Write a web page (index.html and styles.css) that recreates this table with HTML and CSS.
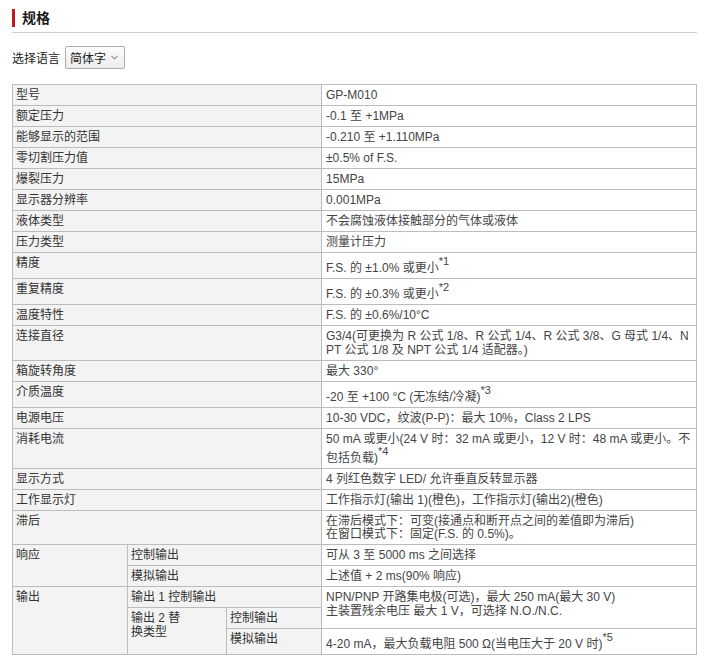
FILE: index.html
```html
<!DOCTYPE html>
<html lang="zh-CN">
<head>
<meta charset="utf-8">
<title>规格</title>
<link rel="stylesheet" href="styles.css">
</head>
<body>
<div class="page">
  <div class="head">
    <h2 class="title">规格</h2>
  </div>
  <div class="lang">
    <span class="lang-label">选择语言</span>
    <span class="select"><span class="select-text">简体字</span><svg class="chev" width="7" height="5" viewBox="0 0 7 5"><path d="M0.5 1 L3.5 4 L6.5 1" fill="none" stroke="#999" stroke-width="1.2"/></svg></span>
  </div>
  <table class="spec">
    <colgroup><col class="c1"><col class="c2"><col class="c3"><col class="c4"></colgroup>
    <tr><th colspan="3">型号</th><td>GP-M010</td></tr>
    <tr><th colspan="3">额定压力</th><td>-0.1 至 +1MPa</td></tr>
    <tr><th colspan="3">能够显示的范围</th><td>-0.210 至 +1.110MPa</td></tr>
    <tr><th colspan="3">零切割压力值</th><td>±0.5% of F.S.</td></tr>
    <tr><th colspan="3">爆裂压力</th><td>15MPa</td></tr>
    <tr><th colspan="3">显示器分辨率</th><td>0.001MPa</td></tr>
    <tr><th colspan="3">液体类型</th><td>不会腐蚀液体接触部分的气体或液体</td></tr>
    <tr><th colspan="3">压力类型</th><td>测量计压力</td></tr>
    <tr><th colspan="3">精度</th><td>F.S. 的 ±1.0% 或更小<sup>*1</sup></td></tr>
    <tr><th colspan="3">重复精度</th><td>F.S. 的 ±0.3% 或更小<sup>*2</sup></td></tr>
    <tr><th colspan="3">温度特性</th><td>F.S. 的 ±0.6%/10°C</td></tr>
    <tr><th colspan="3">连接直径</th><td>G3/4(可更换为 R 公式 1/8、R 公式 1/4、R 公式 3/8、G 母式 1/4、NPT 公式 1/8 及 NPT 公式 1/4 适配器。)</td></tr>
    <tr><th colspan="3">箱旋转角度</th><td>最大 330°</td></tr>
    <tr><th colspan="3">介质温度</th><td>-20 至 +100 °C (无冻结/冷凝)<sup>*3</sup></td></tr>
    <tr><th colspan="3">电源电压</th><td>10-30 VDC，纹波(P-P)：最大 10%，Class 2 LPS</td></tr>
    <tr><th colspan="3">消耗电流</th><td>50 mA 或更小(24 V 时：32 mA 或更小，12 V 时：48 mA 或更小。不包括负载)<sup>*4</sup></td></tr>
    <tr><th colspan="3">显示方式</th><td>4 列红色数字 LED/ 允许垂直反转显示器</td></tr>
    <tr><th colspan="3">工作显示灯</th><td>工作指示灯(输出 1)(橙色)，工作指示灯(输出2)(橙色)</td></tr>
    <tr><th colspan="3">滞后</th><td class="tight">在滞后模式下：可变(接通点和断开点之间的差值即为滞后)<br>在窗口模式下：固定(F.S. 的 0.5%)。</td></tr>
    <tr><th rowspan="2">响应</th><th colspan="2">控制输出</th><td>可从 3 至 5000 ms 之间选择</td></tr>
    <tr><th colspan="2">模拟输出</th><td>上述值 + 2 ms(90% 响应)</td></tr>
    <tr><th rowspan="3">输出</th><th colspan="2">输出 1 控制输出</th><td rowspan="2">NPN/PNP 开路集电极(可选)，最大 250 mA(最大 30 V)<br>主装置残余电压 最大 1 V，可选择 N.O./N.C.</td></tr>
    <tr><th rowspan="2">输出 2 替<br>换类型</th><th>控制输出</th></tr>
    <tr><th>模拟输出</th><td>4-20 mA，最大负载电阻 500 Ω(当电压大于 20 V 时)<sup>*5</sup></td></tr>
  </table>
</div>
</body>
</html>
```

FILE: styles.css
```css
html, body {
  margin: 0;
  padding: 0;
  background: #fff;
}

body {
  font-family: "Liberation Sans", "Noto Sans CJK SC", sans-serif;
  font-size: 12px;
  color: #333;
}

.page {
  padding: 9px 8px 0 12px;
}

.head {
  padding-bottom: 5px;
  border-bottom: 1px solid #cfcfcf;
}

.title {
  margin: 0;
  height: 18px;
  line-height: 18px;
  border-left: 3px solid #c4161c;
  padding-left: 7px;
  font-size: 14px;
  font-weight: bold;
  color: #1a1a1a;
}

.lang {
  display: flex;
  align-items: center;
  gap: 5px;
  margin-top: 13px;
  height: 23px;
}

.lang-label {
  color: #222;
}

.select {
  display: flex;
  align-items: center;
  justify-content: space-between;
  box-sizing: border-box;
  width: 60px;
  height: 23px;
  padding: 0 6px 0 4px;
  border: 1px solid #adadad;
  border-radius: 2px;
  background: linear-gradient(#fdfdfd, #ececec);
  color: #222;
}

.spec {
  margin-top: 15px;
  width: 684px;
  border-collapse: collapse;
  table-layout: fixed;
}

.c1 { width: 115px; }
.c2 { width: 99px; }
.c3 { width: 95px; }
.c4 { width: 375px; }

.spec th,
.spec td {
  border: 1px solid #bcbcbc;
  padding: 3px 3px 3px 3px;
  line-height: 14px;
  vertical-align: top;
  text-align: left;
  font-weight: normal;
}

.spec th {
  background: #f3f3f3;
  color: #333;
}

.spec td {
  background: #fff;
  color: #444;
  padding-left: 4px;
  word-break: break-all;
}

.spec td.tight {
  line-height: 13px;
  padding-top: 4px;
}

.spec sup {
  font-size: 11px;
  line-height: 11px;
  vertical-align: 7px;
}
```
